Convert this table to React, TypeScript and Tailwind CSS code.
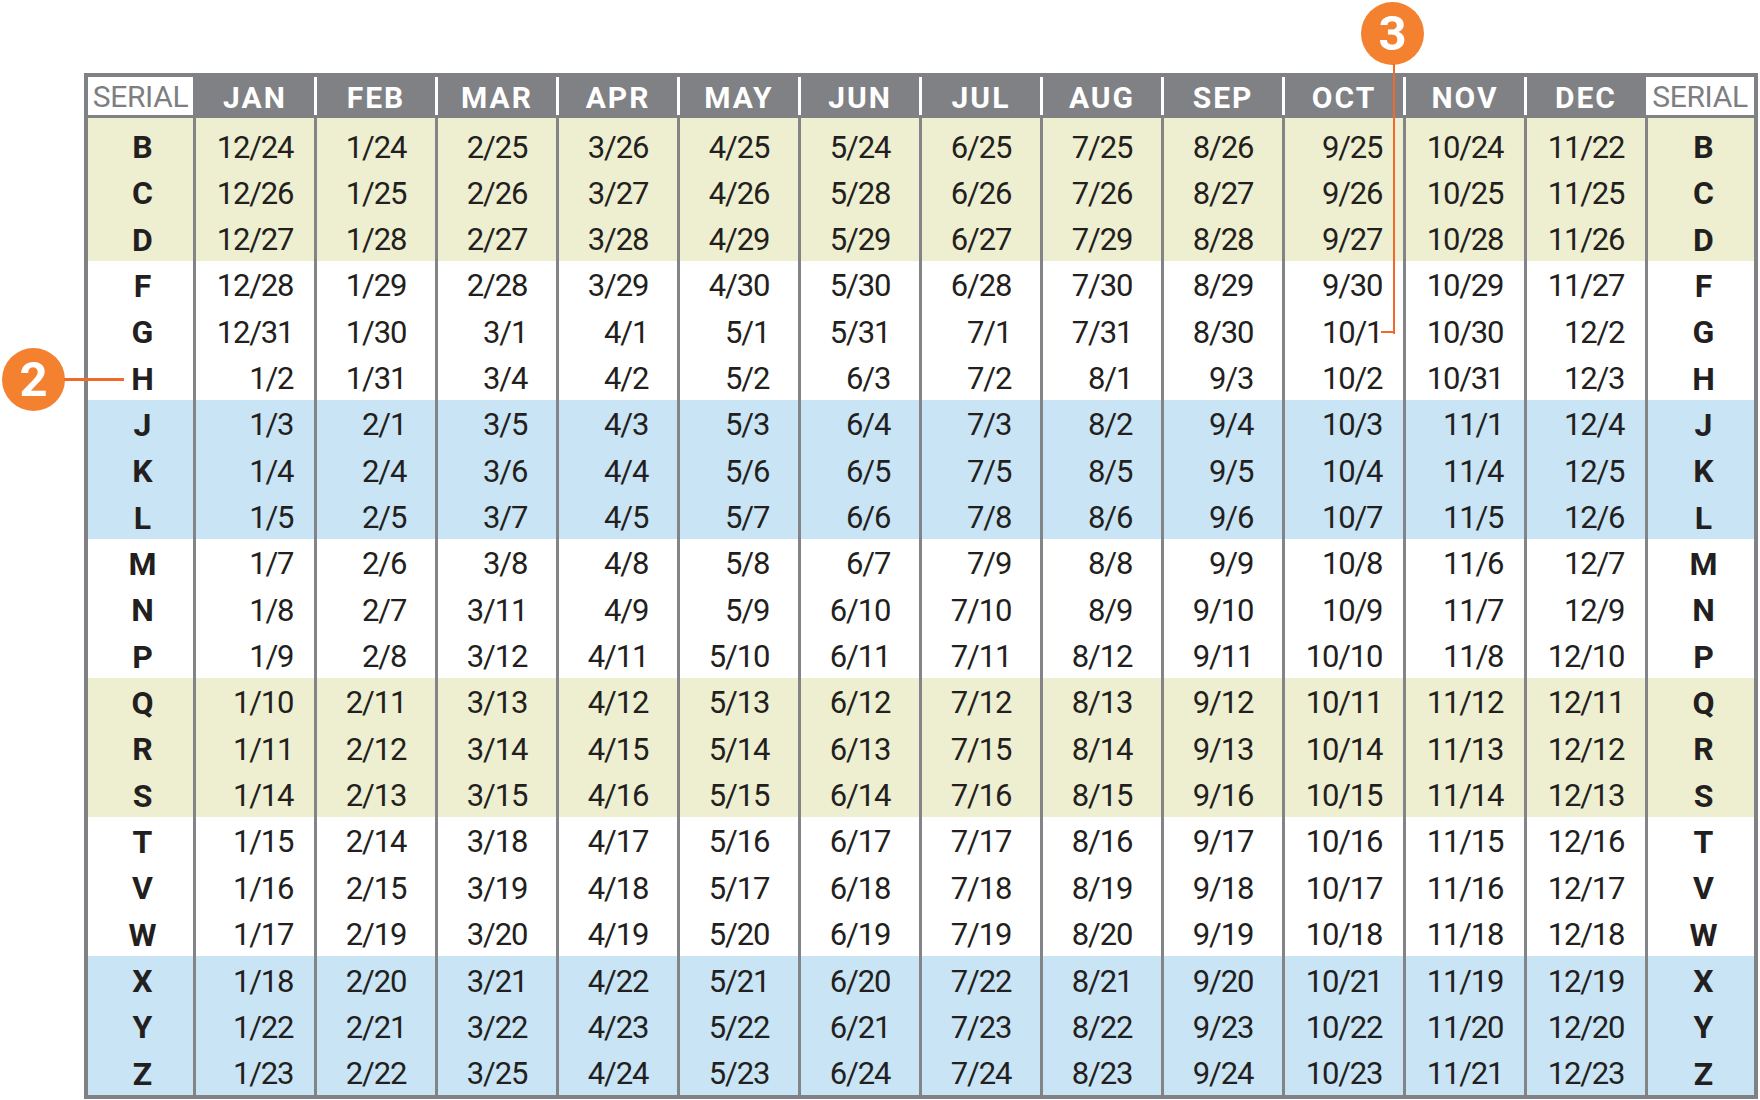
import React from 'react';

const LETTERS = ['B', 'C', 'D', 'F', 'G', 'H', 'J', 'K', 'L', 'M', 'N', 'P', 'Q', 'R', 'S', 'T', 'V', 'W', 'X', 'Y', 'Z'];

const MONTHS: { name: string; dates: string[] }[] = [
  { name: 'JAN', dates: ['12/24', '12/26', '12/27', '12/28', '12/31', '1/2', '1/3', '1/4', '1/5', '1/7', '1/8', '1/9', '1/10', '1/11', '1/14', '1/15', '1/16', '1/17', '1/18', '1/22', '1/23'] },
  { name: 'FEB', dates: ['1/24', '1/25', '1/28', '1/29', '1/30', '1/31', '2/1', '2/4', '2/5', '2/6', '2/7', '2/8', '2/11', '2/12', '2/13', '2/14', '2/15', '2/19', '2/20', '2/21', '2/22'] },
  { name: 'MAR', dates: ['2/25', '2/26', '2/27', '2/28', '3/1', '3/4', '3/5', '3/6', '3/7', '3/8', '3/11', '3/12', '3/13', '3/14', '3/15', '3/18', '3/19', '3/20', '3/21', '3/22', '3/25'] },
  { name: 'APR', dates: ['3/26', '3/27', '3/28', '3/29', '4/1', '4/2', '4/3', '4/4', '4/5', '4/8', '4/9', '4/11', '4/12', '4/15', '4/16', '4/17', '4/18', '4/19', '4/22', '4/23', '4/24'] },
  { name: 'MAY', dates: ['4/25', '4/26', '4/29', '4/30', '5/1', '5/2', '5/3', '5/6', '5/7', '5/8', '5/9', '5/10', '5/13', '5/14', '5/15', '5/16', '5/17', '5/20', '5/21', '5/22', '5/23'] },
  { name: 'JUN', dates: ['5/24', '5/28', '5/29', '5/30', '5/31', '6/3', '6/4', '6/5', '6/6', '6/7', '6/10', '6/11', '6/12', '6/13', '6/14', '6/17', '6/18', '6/19', '6/20', '6/21', '6/24'] },
  { name: 'JUL', dates: ['6/25', '6/26', '6/27', '6/28', '7/1', '7/2', '7/3', '7/5', '7/8', '7/9', '7/10', '7/11', '7/12', '7/15', '7/16', '7/17', '7/18', '7/19', '7/22', '7/23', '7/24'] },
  { name: 'AUG', dates: ['7/25', '7/26', '7/29', '7/30', '7/31', '8/1', '8/2', '8/5', '8/6', '8/8', '8/9', '8/12', '8/13', '8/14', '8/15', '8/16', '8/19', '8/20', '8/21', '8/22', '8/23'] },
  { name: 'SEP', dates: ['8/26', '8/27', '8/28', '8/29', '8/30', '9/3', '9/4', '9/5', '9/6', '9/9', '9/10', '9/11', '9/12', '9/13', '9/16', '9/17', '9/18', '9/19', '9/20', '9/23', '9/24'] },
  { name: 'OCT', dates: ['9/25', '9/26', '9/27', '9/30', '10/1', '10/2', '10/3', '10/4', '10/7', '10/8', '10/9', '10/10', '10/11', '10/14', '10/15', '10/16', '10/17', '10/18', '10/21', '10/22', '10/23'] },
  { name: 'NOV', dates: ['10/24', '10/25', '10/28', '10/29', '10/30', '10/31', '11/1', '11/4', '11/5', '11/6', '11/7', '11/8', '11/12', '11/13', '11/14', '11/15', '11/16', '11/18', '11/19', '11/20', '11/21'] },
  { name: 'DEC', dates: ['11/22', '11/25', '11/26', '11/27', '12/2', '12/3', '12/4', '12/5', '12/6', '12/7', '12/9', '12/10', '12/11', '12/12', '12/13', '12/16', '12/17', '12/18', '12/19', '12/20', '12/23'] },
];

// one colour per group of three rows
const BANDS = ['bg-[#eeefd0]', 'bg-white', 'bg-[#c9e4f4]', 'bg-white', 'bg-[#eeefd0]', 'bg-white', 'bg-[#c9e4f4]'];

const rowClass = (i: number) =>
  `${BANDS[Math.floor(i / 3)]} ${i === 0 ? 'h-[50px] pt-[8px]' : 'h-[46.35px] pt-[4px]'}`;

const roboto = "font-[family-name:Roboto,'Liberation_Sans',sans-serif]";

function SerialHeader() {
  return (
    <div className={`flex h-full items-center justify-center bg-white pt-[2px] text-[30px] leading-none tracking-[-0.3px] text-[#7d7e82] ${roboto}`}>
      SERIAL
    </div>
  );
}

function SerialColumn({ right }: { right?: boolean }) {
  return (
    <div className={right ? 'w-[109px] border-l-[3px] border-[#838488]' : 'w-[105px]'}>
      {LETTERS.map((l, i) => (
        <div
          key={l}
          className={`flex items-center justify-center text-[32px] font-bold leading-none text-[#231f20] ${roboto} ${rowClass(i)} ${
            right ? 'pl-[5px]' : 'pl-[4px]'
          }`}
        >
          {l}
        </div>
      ))}
    </div>
  );
}

function MonthColumn({ dates }: { dates: string[] }) {
  return (
    <div className="grid w-[121px] grid-cols-[1fr_auto_1fr] border-l-[3px] border-[#838488]">
      {dates.map((d, i) => (
        <div key={i} className={`col-span-3 grid grid-cols-subgrid items-center ${rowClass(i)}`}>
          <span className={`col-start-2 text-right text-[31px] leading-none tracking-[-1.2px] text-[#231f20] ${roboto}`}>
            {d}
          </span>
        </div>
      ))}
    </div>
  );
}

function Callout({ n, className }: { n: string; className: string }) {
  return (
    <div
      className={`absolute flex h-[63px] w-[63px] items-center justify-center rounded-full bg-[#f4812f] text-[49px] font-bold leading-none text-white ${roboto} ${className}`}
    >
      {n}
    </div>
  );
}

export default function App() {
  return (
    <div className="relative h-[1100px] w-[1760px] overflow-hidden bg-white pl-[84px] pt-[73px]">
      <div className="w-fit border-4 border-[#808184]">
        {/* header */}
        <div className="flex h-[41px] bg-[#808184] pb-[3px]">
          <div className="w-[105px]">
            <SerialHeader />
          </div>
          {MONTHS.map((m, i) => (
            <div
              key={m.name}
              className={`flex w-[121px] items-center justify-center border-l-[3px] pt-[3px] text-[30px] font-bold leading-none tracking-[2px] text-white ${roboto} ${
                i === 0 ? 'border-transparent' : 'border-white'
              }`}
            >
              {m.name}
            </div>
          ))}
          <div className="w-[109px] pl-[1px]">
            <SerialHeader />
          </div>
        </div>

        {/* body */}
        <div className="flex">
          <SerialColumn />
          {MONTHS.map((m) => (
            <MonthColumn key={m.name} dates={m.dates} />
          ))}
          <SerialColumn right />
        </div>
      </div>

      {/* callout 2 */}
      <Callout n="2" className="left-[2px] top-[348px]" />
      <div className="absolute left-[64px] top-[378px] h-[3px] w-[60px] bg-[#f26a2a]" />

      {/* callout 3 */}
      <Callout n="3" className="left-[1361px] top-[2px]" />
      <div className="absolute left-[1393px] top-[64px] h-[270px] w-[2px] bg-[#f26a2a]" />
      <div className="absolute left-[1381px] top-[331px] h-[2px] w-[14px] bg-[#f26a2a]" />
    </div>
  );
}
